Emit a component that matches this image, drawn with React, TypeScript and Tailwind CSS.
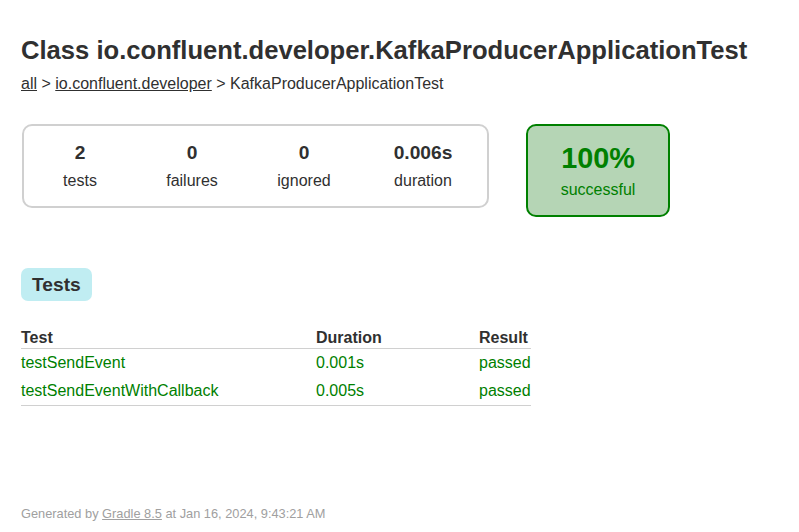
import React from "react";

export default function App() {
  const rows = [
    { name: "testSendEvent", dur: "0.001s" },
    { name: "testSendEventWithCallback", dur: "0.005s" },
  ];
  return (
    <div className="min-h-[532px] w-[799px] bg-white text-[#303030] font-['Liberation_Sans',Arial,sans-serif] text-[16px]">
      <div className="pl-[21px] pt-[36px]">
        <h1 className="text-[25.6px] font-bold leading-[28px] whitespace-nowrap">
          Class io.confluent.developer.KafkaProducerApplicationTest
        </h1>
        <div className="mt-[10px] text-[16px] leading-[19px]">
          <a className="underline">all</a> &gt; <a className="underline">io.confluent.developer</a> &gt; KafkaProducerApplicationTest
        </div>

        <div className="ml-[1px] mt-[31px] flex items-start">
          <div className="flex h-[84px] w-[467px] items-center rounded-[10px] border-2 border-[#d0d0d0]">
            {[
              ["2", "tests", "w-[112px]"],
              ["0", "failures", "w-[112px]"],
              ["0", "ignored", "w-[112px]"],
              ["0.006s", "duration", "w-[126px]"],
            ].map(([n, l, w]) => (
              <div key={l} className={`${w} text-center`}>
                <div className="text-[19.2px] font-bold leading-[22px]">{n}</div>
                <div className="mt-[7px] text-[16px] leading-[19px]">{l}</div>
              </div>
            ))}
          </div>
          <div className="ml-[37px] flex h-[93px] w-[144px] flex-col items-center justify-center rounded-[10px] border-2 border-[#008000] bg-[#b5d5b5] text-[#008000]">
            <div className="text-[28.8px] font-bold leading-[32px]">100%</div>
            <div className="mt-[6px] text-[16px] leading-[19px]">successful</div>
          </div>
        </div>

        <div className="mt-[51px] inline-block rounded-[7px] bg-[#c0edf2] px-[11px] py-[6px] text-[19.2px] font-bold leading-[21px]">
          Tests
        </div>

        <table className="mt-[27px] border-collapse text-[16px]">
          <thead>
            <tr>
              <th className="w-[295px] border-b border-[#d0d0d0] pb-[1px] text-left font-bold leading-[19px]">Test</th>
              <th className="w-[163px] border-b border-[#d0d0d0] pb-[1px] text-left font-bold leading-[19px]">Duration</th>
              <th className="border-b border-[#d0d0d0] pb-[1px] text-left font-bold leading-[19px]">Result</th>
            </tr>
          </thead>
          <tbody className="text-[#008000]">
            {rows.map((r, i) => (
              <tr key={r.name} className={i === rows.length - 1 ? "border-b border-[#d0d0d0]" : ""}>
                <td className="pt-[4px] pb-[5px] leading-[19px]">{r.name}</td>
                <td className="pt-[4px] pb-[5px] leading-[19px]">{r.dur}</td>
                <td className="pt-[4px] pb-[5px] leading-[19px]">passed</td>
              </tr>
            ))}
          </tbody>
        </table>

        <div className="mt-[100px] text-[12.8px] leading-[15px] text-[#a0a0a0] whitespace-nowrap">
          Generated by <a className="underline">Gradle 8.5</a> at Jan 16, 2024, 9:43:21 AM
        </div>
      </div>
    </div>
  );
}
